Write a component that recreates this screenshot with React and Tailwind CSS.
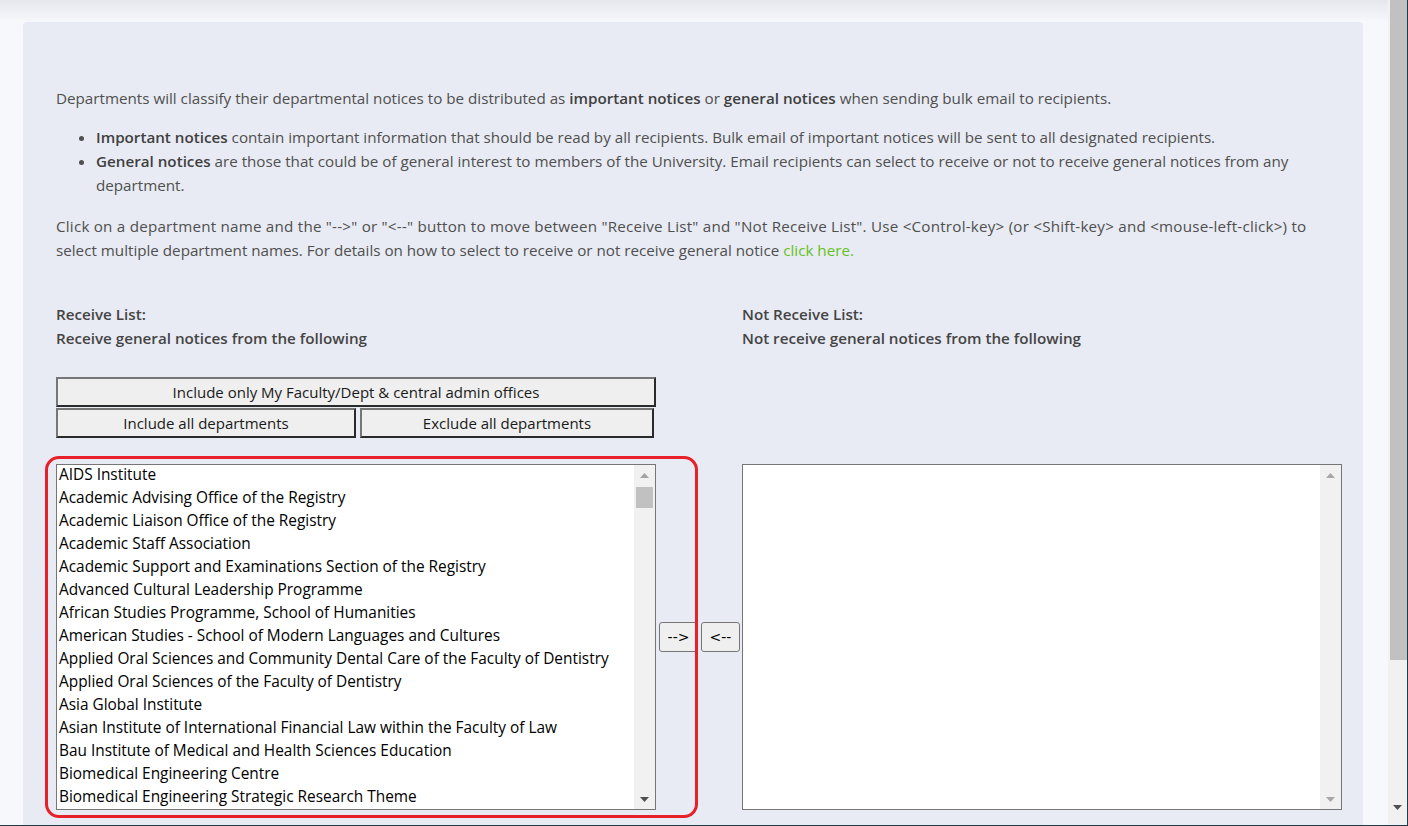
import React from "react";

const items = [
  "AIDS Institute",
  "Academic Advising Office of the Registry",
  "Academic Liaison Office of the Registry",
  "Academic Staff Association",
  "Academic Support and Examinations Section of the Registry",
  "Advanced Cultural Leadership Programme",
  "African Studies Programme, School of Humanities",
  "American Studies - School of Modern Languages and Cultures",
  "Applied Oral Sciences and Community Dental Care of the Faculty of Dentistry",
  "Applied Oral Sciences of the Faculty of Dentistry",
  "Asia Global Institute",
  "Asian Institute of International Financial Law within the Faculty of Law",
  "Bau Institute of Medical and Health Sciences Education",
  "Biomedical Engineering Centre",
  "Biomedical Engineering Strategic Research Theme",
];

const Up = ({ c }) => (
  <svg width="9" height="5" viewBox="0 0 9 5"><polygon points="0,5 9,5 4.5,0" fill={c} /></svg>
);
const Down = ({ c }) => (
  <svg width="9" height="5" viewBox="0 0 9 5"><polygon points="0,0 9,0 4.5,5" fill={c} /></svg>
);

const Btn = ({ children, className }) => (
  <button
    className={
      "h-[30px] bg-[#efefef] border-2 border-t-[#767676] border-l-[#767676] border-b-[#2a2a2a] border-r-[#2a2a2a] text-[15px] text-[#1a1a1a] leading-none " +
      className
    }
  >
    {children}
  </button>
);

export default function App() {
  return (
    <div
      className="h-[826px] w-[1408px] overflow-hidden flex border-r border-b border-[#1f3b4b] bg-[#f7f8fc]"
      style={{ fontFamily: "'Open Sans', 'Noto Sans', sans-serif" }}
    >
      <div className="w-[1388px] flex flex-col">
        <div className="h-[22px] shrink-0 bg-gradient-to-b from-[#e6e7ec] to-[#f7f8fc]" />
        <div className="ml-[23px] w-[1340px] flex-1 rounded-t-[4px] bg-[#e8ebf3] pt-[64px] pl-[33px] pr-[21px] text-[15.2px] leading-[24px] text-[#4f4f4f]">
          <p>
            Departments will classify their departmental notices to be distributed as{" "}
            <b className="font-semibold text-[#3f3f3f]">important notices</b> or <b className="font-semibold text-[#3f3f3f]">general notices</b> when sending bulk email to recipients.
          </p>
          <ul className="list-disc pl-[40px] mt-[15px]">
            <li>
              <b className="font-semibold text-[#3f3f3f]">Important notices</b> contain important information that should be read by all recipients. Bulk email of important notices will be sent to all designated recipients.
            </li>
            <li>
              <b className="font-semibold text-[#3f3f3f]">General notices</b> are those that could be of general interest to members of the University. Email recipients can select to receive or not to receive general notices from any department.
            </li>
          </ul>
          <p className="mt-[17px]">
            <span className="tracking-[0.22px]">
              Click on a department name and the "--&gt;" or "&lt;--" button to move between "Receive List" and "Not Receive List". Use &lt;Control-key&gt; (or &lt;Shift-key&gt; and &lt;mouse-left-click&gt;) to
            </span>
            <br />
            select multiple department names. For details on how to select to receive or not receive general notice{" "}
            <span className="text-[#66c11c]">click here.</span>
          </p>

          <div className="grid grid-cols-[600px_86px_600px] mt-[40px]">
            <div className="font-semibold text-[#444]">
              <div>Receive List:</div>
              <div>Receive general notices from the following</div>
            </div>
            <div />
            <div className="font-semibold text-[#444]">
              <div>Not Receive List:</div>
              <div>Not receive general notices from the following</div>
            </div>

            <div className="mt-[27px] flex flex-col gap-[1px]">
              <Btn className="w-[600px] h-[29px]">Include only My Faculty/Dept &amp; central admin offices</Btn>
              <div className="flex gap-[4px]">
                <Btn className="w-[300px]">Include all departments</Btn>
                <Btn className="w-[294px]">Exclude all departments</Btn>
              </div>
            </div>
            <div />
            <div />

            <div className="relative mt-[26px]">
              <div className="h-[346px] border border-[#767676] bg-white flex">
                <div className="flex-1 overflow-hidden pl-[2px] text-black text-[15.4px] leading-[23px]">
                  <div className="-mt-[2px]">
                    {items.map((t) => (
                      <div key={t} className="whitespace-nowrap">{t}</div>
                    ))}
                  </div>
                </div>
                <div className="w-[21px] bg-[#f1f1f1] flex flex-col items-center">
                  <div className="h-[20px] flex items-center justify-center"><Up c="#a3a3a3" /></div>
                  <div className="w-[17px] h-[21px] bg-[#c1c1c1] mt-[2px]" />
                  <div className="flex-1" />
                  <div className="h-[20px] flex items-center justify-center"><Down c="#505050" /></div>
                </div>
              </div>
              <div className="absolute left-[-11px] top-[-8px] w-[653px] h-[362px] border-[3px] border-[#e8202a] rounded-[14px] pointer-events-none" />
            </div>
            <div className="mt-[26px] flex items-center justify-center gap-[3px] pl-[1px]">
              <button className="w-[39px] h-[30px] rounded-[3px] border border-[#767676] bg-[#efefef] text-[14px] text-black leading-none" style={{ fontFamily: "'DejaVu Sans', sans-serif" }}>--&gt;</button>
              <button className="w-[39px] h-[30px] rounded-[3px] border border-[#767676] bg-[#efefef] text-[14px] text-black leading-none" style={{ fontFamily: "'DejaVu Sans', sans-serif" }}>&lt;--</button>
            </div>
            <div className="mt-[26px]">
              <div className="h-[346px] border border-[#767676] bg-white flex">
                <div className="flex-1" />
                <div className="w-[21px] bg-[#f1f1f1] flex flex-col items-center">
                  <div className="h-[20px] flex items-center justify-center"><Up c="#a8a8a8" /></div>
                  <div className="flex-1" />
                  <div className="h-[20px] flex items-center justify-center"><Down c="#a8a8a8" /></div>
                </div>
              </div>
            </div>
          </div>
        </div>
      </div>
      <div className="w-[19px] bg-[#f1f1f1] flex flex-col items-center">
        <div className="w-[17px] h-[660px] bg-[#c1c1c1] ml-[1px]" />
        <div className="flex-1" />
        <div className="h-[28px] flex items-start justify-center pt-[8px]"><Down c="#505050" /></div>
      </div>
    </div>
  );
}
